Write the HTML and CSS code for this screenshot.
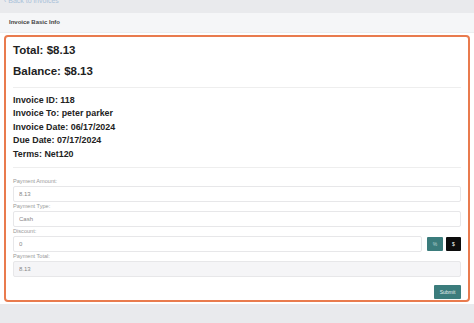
FILE: index.html
```html
<!DOCTYPE html>
<html lang="en">
<head>
  <meta charset="UTF-8">
  <title>Invoice Payment</title>
  <link rel="stylesheet" href="styles.css">
</head>
<body>

  <!-- Top nav -->
  <div class="topbar">
    <a class="back-link" href="#">&lsaquo; Back to invoices</a>
  </div>

  <div class="section-head">Invoice Basic Info</div>

  <div class="panel">
    <div class="card">
      <div class="big-line">Total: $8.13</div>
      <div class="big-line">Balance: $8.13</div>

      <hr class="divider first">

      <div class="info">
        <div>Invoice ID: 118</div>
        <div>Invoice To: peter parker</div>
        <div>Invoice Date: 06/17/2024</div>
        <div>Due Date: 07/17/2024</div>
        <div>Terms: Net120</div>
      </div>

      <hr class="divider second">

      <!-- Payment form -->
      <form class="pay-form" onsubmit="return false">
        <label class="field-label">Payment Amount:</label>
        <input class="field" type="text" value="8.13">

        <label class="field-label">Payment Type:</label>
        <input class="field" type="text" value="Cash">

        <label class="field-label">Discount:</label>
        <div class="discount-row">
          <input class="field" type="text" value="0">
          <button class="mini-btn pct" type="button">%</button>
          <button class="mini-btn dollar" type="button">$</button>
        </div>

        <label class="field-label">Payment Total:</label>
        <input class="field readonly" type="text" value="8.13" readonly>

        <div class="actions">
          <button class="submit-btn" type="submit">Submit</button>
        </div>
      </form>
    </div>
  </div>

  <div class="footer-band"></div>

</body>
</html>
```

FILE: styles.css
```css
body {
  margin: 0;
  font-family: "Liberation Sans", Arial, sans-serif;
  background: #e9eaed;
  color: #222;
}

.topbar {
  height: 13px;
  background: #e9eaed;
  overflow: hidden;
}

.back-link {
  display: block;
  margin: -4px 0 0 4px;
  font-size: 7px;
  line-height: 10px;
  color: #a9c2da;
  text-decoration: none;
}

.section-head {
  height: 20px;
  line-height: 19px;
  padding-left: 9px;
  background: #f5f6f8;
  border-bottom: 1px solid #eceef0;
  font-size: 6px;
  font-weight: bold;
  color: #444;
  box-sizing: border-box;
}

.panel {
  background: #fff;
  padding: 2px 4px;
}

.card {
  border: 2px solid #e97b4e;
  border-radius: 4px;
  padding: 3px 7px 1px;
}

.big-line {
  font-size: 11.5px;
  font-weight: bold;
  line-height: 21px;
}

.divider {
  border: none;
  border-top: 1px solid #eeeeee;
  margin: 0;
}

.divider.first {
  margin-top: 5px;
}

.divider.second {
  margin-top: 6px;
}

.info {
  margin-top: 6px;
  font-size: 8.9px;
  font-weight: bold;
  line-height: 13.4px;
}

.pay-form {
  margin-top: 9px;
}

.field-label {
  display: block;
  font-size: 5.6px;
  line-height: 8px;
  color: #999;
}

.field {
  display: block;
  width: 100%;
  height: 16px;
  margin-top: 1px;
  padding: 0 5px;
  box-sizing: border-box;
  border: 1px solid #e7e7e9;
  border-radius: 2px;
  background: #fff;
  font-family: "Liberation Sans", Arial, sans-serif;
  font-size: 6px;
  color: #888;
  outline: none;
}

.field.readonly {
  background: #f5f5f7;
}

.discount-row {
  display: flex;
  align-items: center;
}

.discount-row .field {
  flex: 1;
  margin-right: 5px;
}

.mini-btn {
  height: 14px;
  margin-top: 1px;
  padding: 0;
  border: none;
  border-radius: 1px;
  color: #fff;
  font-family: "Liberation Sans", Arial, sans-serif;
  font-size: 5px;
  cursor: pointer;
}

.mini-btn.pct {
  width: 16px;
  background: #3b7c7c;
  color: #b9d3d3;
}

.mini-btn.dollar {
  width: 15px;
  margin-left: 3px;
  background: #0c0c0c;
}

.actions {
  display: flex;
  justify-content: flex-end;
  margin-top: 8px;
}

.submit-btn {
  width: 27px;
  height: 14px;
  padding: 0;
  border: none;
  border-radius: 1px;
  background: #3b7c7c;
  color: #e3eeee;
  font-family: "Liberation Sans", Arial, sans-serif;
  font-size: 5px;
  cursor: pointer;
}

.footer-band {
  height: 20px;
  background: #e9eaed;
}
```
